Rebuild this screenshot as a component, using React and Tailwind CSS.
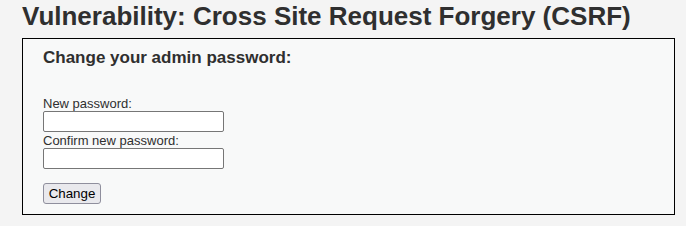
export default function App() {
  return (
    <div className="w-[686px] h-[226px] bg-[#f4f4f4] text-[#2f2f2f] overflow-hidden" style={{ fontFamily: '"Liberation Sans", Arial, sans-serif' }}>
      <div className="pl-[22px] pr-[11px] pt-[1px]">
        <h1 className="text-[26px] leading-[30px] font-bold m-0">Vulnerability: Cross Site Request Forgery (CSRF)</h1>
        <div className="mt-[7px] border border-black bg-[#f8f9f9] pl-[20px] pt-[9px] pb-[9px] h-[177px]">
          <h3 className="text-[17px] leading-[20px] font-bold">Change your admin password:</h3>
          <form className="flex flex-col items-start mt-[28px] text-[13px]" onSubmit={(e) => e.preventDefault()}>
            <label className="leading-[15px]">New password:</label>
            <input type="password" className="w-[181px] h-[21px] bg-white border border-[#767676] rounded-[2px]" />
            <label className="leading-[15px] mt-[1px]">Confirm new password:</label>
            <input type="password" className="w-[181px] h-[21px] bg-white border border-[#767676] rounded-[2px]" />
            <button type="submit" className="mt-[14px] h-[21px] w-[58px] bg-[#e9e9ed] border border-[#8f8f9d] rounded-[3px] text-[13.33px] leading-[15px] text-black">Change</button>
          </form>
        </div>
      </div>
    </div>
  );
}
